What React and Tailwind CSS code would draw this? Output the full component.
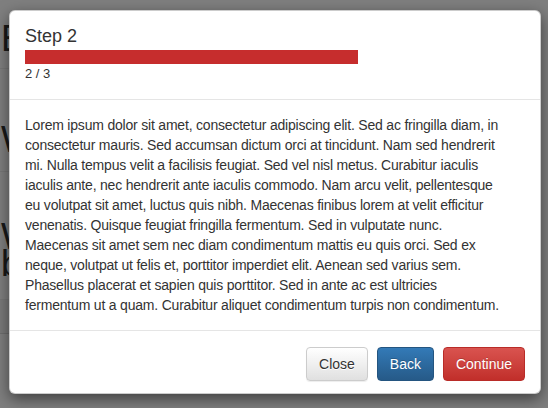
import React from "react";

const text =
  "Lorem ipsum dolor sit amet, consectetur adipiscing elit. Sed ac fringilla diam, in consectetur mauris. Sed accumsan dictum orci at tincidunt. Nam sed hendrerit mi. Nulla tempus velit a facilisis feugiat. Sed vel nisl metus. Curabitur iaculis iaculis ante, nec hendrerit ante iaculis commodo. Nam arcu velit, pellentesque eu volutpat sit amet, luctus quis nibh. Maecenas finibus lorem at velit efficitur venenatis. Quisque feugiat fringilla fermentum. Sed in vulputate nunc. Maecenas sit amet sem nec diam condimentum mattis eu quis orci. Sed ex neque, volutpat ut felis et, porttitor imperdiet elit. Aenean sed varius sem. Phasellus placerat et sapien quis porttitor. Sed in ante ac est ultricies fermentum ut a quam. Curabitur aliquet condimentum turpis non condimentum.";

const step = 2;
const total = 3;

const App = () => {
  return (
    <div className="relative w-[548px] h-[408px] overflow-hidden bg-white text-[#333] font-['Liberation_Sans',Arial,sans-serif]">
      {/* page behind the modal */}
      <div className="w-[9px] overflow-hidden whitespace-nowrap">
        <h1 className="mt-[19px] mb-[9px] text-[36px] leading-[1.1] pl-[1px]">E</h1>
        <hr className="w-[548px] border-[#eee]" />
        <h2 className="mt-[51px] mb-[12px] text-[36px] leading-[1.1] pl-[1px]">W</h2>
        <hr className="w-[548px] border-[#eee]" />
        <h2 className="mt-[51px] text-[36px] leading-[27px] pl-[1px]">
          W
          <br />b
        </h2>
        <hr className="w-[548px] mt-[22px] border-[#eee]" />
        <div className="w-[548px] h-[34px] bg-[#f5f5f5] border-b border-[#ddd]" />
      </div>

      {/* backdrop */}
      <div className="absolute inset-0 bg-black/50" />

      {/* modal */}
      <div className="absolute left-[9px] top-[10px] w-[532px] bg-white rounded-[6px] border border-black/20 shadow-[0_5px_15px_rgba(0,0,0,0.5)]">
        <div className="px-[15px] pt-[15px] pb-[15px] border-b border-[#e5e5e5]">
          <h4 className="text-[18px] leading-[20px] text-[#333]">Step {step}</h4>
          <div className="mt-[4px] h-[14px]">
            <div
              className="h-full bg-[#c62d2d]"
              style={{ width: `${(step / total) * 100}%` }}
            />
          </div>
          <div className="text-[13px] leading-[20px] text-[#333]">
            {step} / {total}
          </div>
        </div>

        <div className="pl-[15px] pr-[36px] py-[15px] text-[14px] leading-[20px] tracking-[-0.2px] text-[#333]">
          {text}
        </div>

        <div className="flex justify-end gap-[9px] px-[15px] pt-[16px] pb-[12px] border-t border-[#e5e5e5]">
          <button className="h-[34px] px-[12px] rounded-[4px] border border-[#ccc] bg-gradient-to-b from-white to-[#e0e0e0] text-[14px] text-[#333] [text-shadow:0_1px_0_#fff] shadow-[0_1px_1px_rgba(0,0,0,0.075)]">
            Close
          </button>
          <button className="h-[34px] px-[12px] rounded-[4px] border border-[#245580] bg-gradient-to-b from-[#337ab7] to-[#265a88] text-[14px] text-white [text-shadow:0_-1px_0_rgba(0,0,0,0.2)]">
            Back
          </button>
          <button className="h-[34px] px-[12px] rounded-[4px] border border-[#b92c28] bg-gradient-to-b from-[#d9534f] to-[#c12e2a] text-[14px] text-white [text-shadow:0_-1px_0_rgba(0,0,0,0.2)]">
            Continue
          </button>
        </div>
      </div>
    </div>
  );
};

export default App;
